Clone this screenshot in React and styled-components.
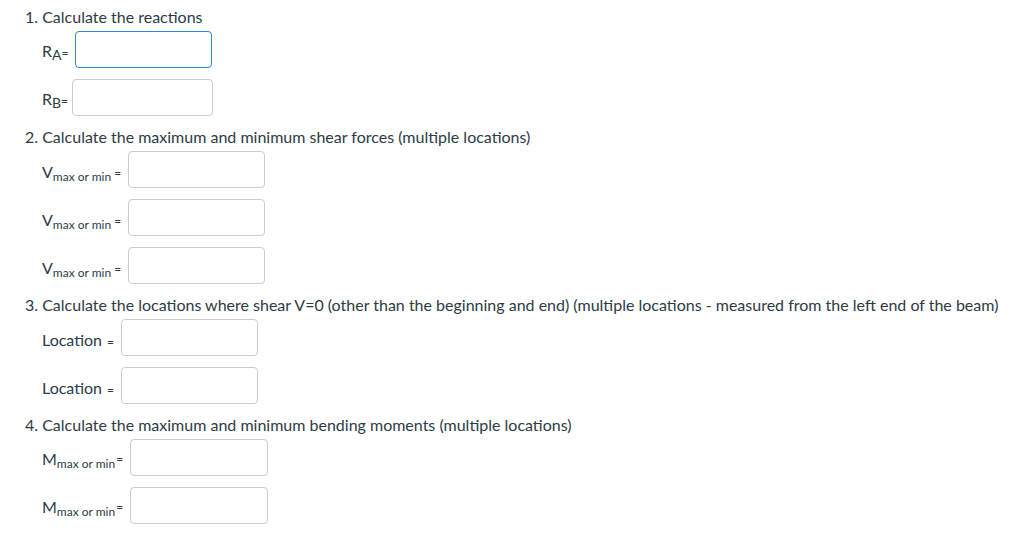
import React from 'react';
import styled, { createGlobalStyle, css } from 'styled-components';

const GlobalStyle = createGlobalStyle`
  html, body {
    margin: 0;
    padding: 0;
    background: #ffffff;
  }
  body {
    font-family: Lato, "Open Sans", "Liberation Sans", sans-serif;
    color: #2d3b45;
  }
`;

const Page = styled.div`
  padding: 7px 0 0 25px;
  display: flex;
  flex-direction: column;
  gap: 11px;
`;

const Question = styled.section`
  display: flex;
  flex-direction: column;
  gap: 11px;
`;

const Heading = styled.div`
  font-size: 16px;
  line-height: 20px;
  margin-bottom: -7px;
  white-space: nowrap;
`;

const Row = styled.div`
  display: flex;
  align-items: center;
  height: 37px;
  padding-left: 17px;
`;

const Label = styled.span`
  display: inline-block;
  white-space: nowrap;
  font-size: 16px;
  line-height: 20px;
  margin-right: ${(p) => p.$gap || 6}px;
  margin-top: ${(p) => p.$down || 4}px;
`;

const Sub = styled.sub`
  font-size: ${(p) => p.$size || 12}px;
  vertical-align: -${(p) => p.$drop || 3}px;
  line-height: 1;
`;

const Eq = styled.span`
  font-size: 12px;
  margin-left: ${(p) => p.$left || 0}px;
  vertical-align: ${(p) => p.$up || 0}px;
`;

const Box = styled.input`
  box-sizing: border-box;
  width: ${(p) => p.$w || 137}px;
  height: 37px;
  margin: 0;
  padding: 0 8px;
  border: 1px solid #c7cdd1;
  border-radius: 4px;
  background: #fff;
  outline: none;
  font-family: inherit;
  font-size: 14px;
  color: #2d3b45;

  ${(p) =>
    p.$focus &&
    css`
      border-color: #2a85d8;
    `}
`;

function App() {
  return (
    <>
      <GlobalStyle />
      <Page>
        <Question>
          <Heading>1. Calculate the reactions</Heading>
          <Row>
            <Label $gap={7} $down={5}>
              R<Sub $size={14} $drop={3}>A</Sub><Eq>=</Eq>
            </Label>
            <Box type="text" $focus $w={137} />
          </Row>
          <Row>
            <Label $gap={4} $down={5}>
              R<Sub $size={14} $drop={3}>B</Sub><Eq>=</Eq>
            </Label>
            <Box type="text" $w={141} />
          </Row>
        </Question>

        <Question>
          <Heading>2. Calculate the maximum and minimum shear forces (multiple locations)</Heading>
          {[0, 1, 2].map((i) => (
            <Row key={i}>
              <Label $gap={7} $down={5}>
                V<Sub>max or min</Sub><Eq $left={3} $up={1}>=</Eq>
              </Label>
              <Box type="text" />
            </Row>
          ))}
        </Question>

        <Question>
          <Heading>
            3. Calculate the locations where shear V=0 (other than the beginning and end) (multiple locations - measured from the left end of the beam)
          </Heading>
          {[0, 1].map((i) => (
            <Row key={i}>
              <Label $gap={7} $down={6}>
                Location<Eq $left={5}>=</Eq>
              </Label>
              <Box type="text" />
            </Row>
          ))}
        </Question>

        <Question>
          <Heading>4. Calculate the maximum and minimum bending moments (multiple locations)</Heading>
          {[0, 1].map((i) => (
            <Row key={i}>
              <Label $gap={7}>
                M<Sub>max or min</Sub><Eq $left={1} $up={2}>=</Eq>
              </Label>
              <Box type="text" $w={138} />
            </Row>
          ))}
        </Question>
      </Page>
    </>
  );
}

export default App;
